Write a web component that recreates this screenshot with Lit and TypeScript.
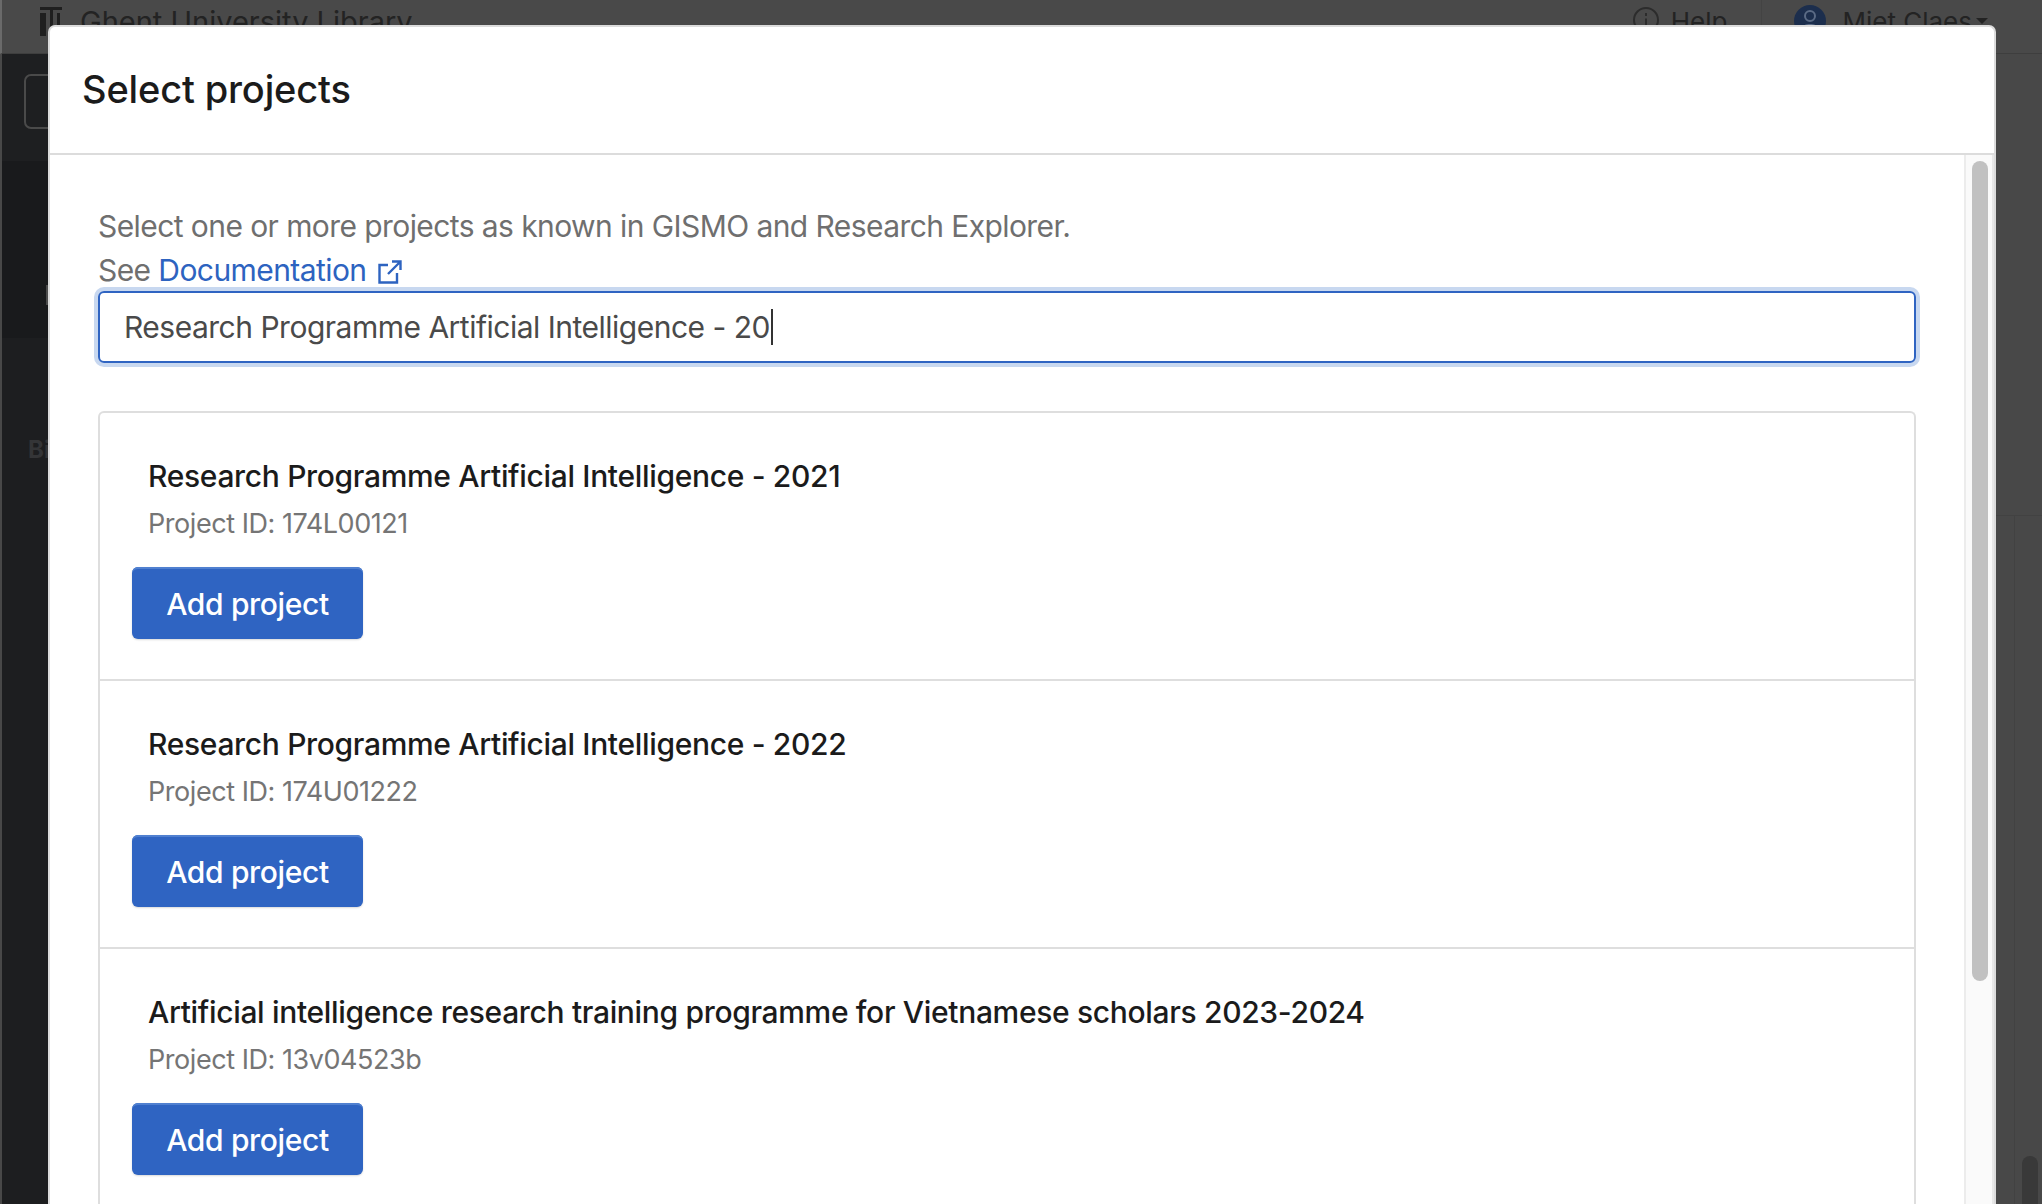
import { LitElement, html, css } from "lit";
import { customElement } from "lit/decorators.js";

const PROJECTS = [
  { title: "Research Programme Artificial Intelligence - 2021", id: "174L00121" },
  { title: "Research Programme Artificial Intelligence - 2022", id: "174U01222" },
  { title: "Artificial intelligence research training programme for Vietnamese scholars 2023-2024", id: "13v04523b" },
];

@customElement("app-root")
export class AppRoot extends LitElement {
  static styles = css`
    :host {
      display: block;
      position: relative;
      width: 2042px;
      height: 1204px;
      overflow: hidden;
      background: #1c1d1f;
      font-family: Inter, "Noto Sans", sans-serif;
    }
    * { box-sizing: border-box; }

    /* dimmed page behind the dialog */
    .page { position: absolute; inset: 0; display: flex; flex-direction: column; }
    .topbar {
      height: 54px; flex: none; background: #494949;
      display: flex; align-items: flex-start;
      border-left: 2px solid #6a6a6a;
      border-bottom: 1px solid #3e3e3e;
      color: #232323;
    }
    .logo { margin: 7px 0 0 38px; flex: none; }
    .brand { margin: 4px 0 0 18px; font-size: 29px; line-height: 36px; white-space: nowrap; }
    .spacer { flex: 1; }
    .help-ico { margin-top: 7px; flex: none; }
    .help { margin: 6px 0 0 12px; font-size: 26px; line-height: 32px; }
    .vline { width: 1px; height: 54px; background: #434343; margin: 0 32px 0 34px; }
    .avatar { width: 32px; height: 32px; margin-top: 5px; flex: none; }
    .user { margin: 6px 0 0 16px; font-size: 26px; line-height: 32px; white-space: nowrap; }
    .caret-down {
      width: 0; height: 0; margin: 18px 54px 0 4px; flex: none;
      border-left: 6px solid transparent; border-right: 6px solid transparent; border-top: 6px solid #232323;
    }
    .main { flex: 1; display: flex; min-height: 0; }
    .left { width: 1996px; border-left: 2px solid #484848; display: flex; flex-direction: column; }
    .band1 { height: 107px; background: #1e1f21; padding: 20px 0 0 22px; }
    .ghost-box { width: 100px; height: 55px; border: 2px solid #4a4a4a; border-radius: 7px; }
    .band2 { height: 177px; background: #191a1c; padding: 124px 0 0 44px; }
    .tick { width: 4px; height: 20px; background: #4c4c4c; }
    .band3 { flex: 1; background: #1d1e20; padding: 97px 0 0 26px; color: #343537; font-size: 24px; font-weight: 700; line-height: 30px; }
    .right { flex: 1; background: #484848; display: flex; flex-direction: column; min-width: 0; }
    .r-top { height: 462px; border-bottom: 1px solid #424242; flex: none; }
    .r-bot { flex: 1; display: flex; }
    .r-col { width: 19px; border-right: 1px solid #424242; }
    .r-scroll { flex: 1; display: flex; align-items: flex-end; padding: 0 4px 0 7px; }
    .r-thumb { width: 16px; height: 48px; background: #393939; border-radius: 8px 8px 0 0; }

    /* dialog */
    .modal {
      position: absolute; left: 48px; top: 25px; width: 1948px; height: 1179px;
      background: #fff; border: 2px solid #dcdcdc; border-bottom: 0;
      border-radius: 7px 7px 0 0;
      display: flex; flex-direction: column; overflow: hidden;
    }
    .head {
      height: 128px; flex: none; border-bottom: 2px solid #dcdcdc;
      display: flex; align-items: center; padding: 0 0 2px 32px;
    }
    h2 { margin: 0; font-size: 38px; line-height: 44px; font-weight: 500; color: #1b1b1b; letter-spacing: -0.15px; }
    .body { flex: 1; min-height: 0; display: flex; }
    .content { flex: 1; min-width: 0; padding: 49px 48px 0 48px; overflow: hidden; }
    .desc { margin: 0; font-size: 30px; line-height: 44px; color: #6f6f6f; letter-spacing: -0.58px; }
    .desc a { color: #2d63c0; text-decoration: none; }
    .ext { vertical-align: -3px; margin-left: 12px; }
    .input {
      height: 72px; border: 2px solid #2f64c2; border-radius: 6px;
      box-shadow: 0 0 0 4px #c8d8f0;
      display: flex; align-items: center; padding-left: 24px;
      font-size: 30px; color: #4a4a4a; margin-top: -1px; letter-spacing: -0.5px;
    }
    .cursor { width: 2px; height: 36px; background: #333; margin-left: 1px; }
    .list { margin-top: 48px; border: 2px solid #dedede; border-bottom: 0; border-radius: 6px 6px 0 0; }
    .item { height: 268px; padding: 43px 0 0 32px; border-bottom: 2px solid #dedede; }
    .item:last-child { border-bottom: 0; }
    .title { margin: 0 0 0 16px; font-size: 30px; line-height: 40px; font-weight: 500; color: #1b1b1b; letter-spacing: -0.33px; }
    .pid { margin: 8px 0 0 16px; font-size: 27px; line-height: 40px; color: #757575; letter-spacing: -0.45px; }
    button {
      display: block; margin-top: 23px; width: 231px; height: 72px;
      border: 0; border-radius: 6px; background: #2f64c2; color: #fff;
      box-shadow: inset 0 3px 0 -1px #5080d0, 0 1px 2px rgba(0,0,0,.15);
      font: 500 30px/1 Inter, "Noto Sans", sans-serif; padding: 2px 0 0; letter-spacing: -0.35px;
    }
    .track { width: 30px; flex: none; background: #fafafa; border-left: 2px solid #ececec; border-right: 2px solid #e8e8e8; padding: 6px 4px 0 6px; }
    .thumb { height: 820px; background: #c1c1c1; border-radius: 8px; }
  `;

  render() {
    return html`
      <div class="page">
        <div class="topbar">
          <svg class="logo" width="22" height="29" viewBox="0 0 22 29" fill="#1f1f1f">
            <rect x="0" y="0" width="22" height="3"/>
            <rect x="0" y="6" width="6" height="23"/>
            <rect x="10" y="3" width="3" height="26"/>
            <rect x="17" y="6" width="3" height="20"/>
          </svg>
          <div class="brand">Ghent University Library</div>
          <div class="spacer"></div>
          <svg class="help-ico" width="26" height="26" viewBox="0 0 26 26" fill="none" stroke="#2c2c2c" stroke-width="2">
            <circle cx="13" cy="13" r="12"/><path d="M13 11.5v8M13 6v3"/>
          </svg>
          <div class="help">Help</div>
          <div class="vline"></div>
          <svg class="avatar" viewBox="0 0 32 32">
            <circle cx="16" cy="16" r="16" fill="#1c2e4d"/>
            <circle cx="16" cy="11" r="5" fill="none" stroke="#5b6b85" stroke-width="2"/>
            <path d="M7 25c1-5 5-6 9-6s8 1 9 6z" fill="#5b6b85"/>
          </svg>
          <div class="user">Miet Claes</div>
          <div class="caret-down"></div>
        </div>
        <div class="main">
          <div class="left">
            <div class="band1"><div class="ghost-box"></div></div>
            <div class="band2"><div class="tick"></div></div>
            <div class="band3">Bi</div>
          </div>
          <div class="right">
            <div class="r-top"></div>
            <div class="r-bot">
              <div class="r-col"></div>
              <div class="r-scroll"><div class="r-thumb"></div></div>
            </div>
          </div>
        </div>
      </div>

      <div class="modal">
        <div class="head"><h2>Select projects</h2></div>
        <div class="body">
          <div class="content">
            <p class="desc">Select one or more projects as known in GISMO and Research Explorer.<br />See <a>Documentation<svg class="ext" width="24" height="24" viewBox="0 0 24 24" fill="none" stroke="#2d63c0" stroke-width="2.4"><path d="M10 5H1.5v17.5H19V13M10 14 22.5 1.5M14 1.5h8.5V10"/></svg></a></p>
            <div class="input"><span>Research Programme Artificial Intelligence - 20</span><span class="cursor"></span></div>
            <div class="list">
              ${PROJECTS.map(
                (p) => html`<div class="item">
                  <p class="title">${p.title}</p>
                  <p class="pid">Project ID: ${p.id}</p>
                  <button>Add project</button>
                </div>`
              )}
            </div>
          </div>
          <div class="track"><div class="thumb"></div></div>
        </div>
      </div>
    `;
  }
}
